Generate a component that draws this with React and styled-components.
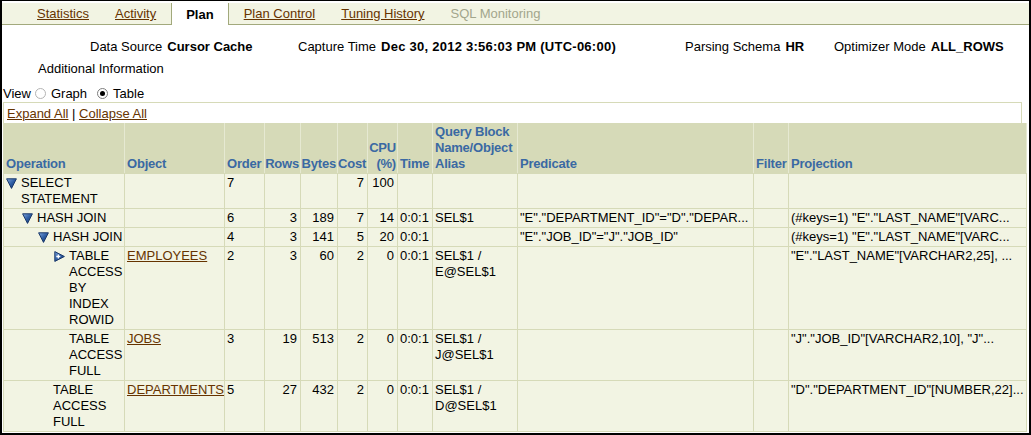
import React from "react";
import styled, { createGlobalStyle } from "styled-components";

const GlobalStyle = createGlobalStyle`
  html, body {
    margin: 0;
    padding: 0;
    background: #fff;
  }
  body {
    font-family: "Liberation Sans", Arial, sans-serif;
    font-size: 13px;
    color: #000;
  }
`;

const beige = "#f2f4e3";
const headerBg = "#d6dab8";
const olive = "#a2a97c";
const linkColor = "#663300";
const headBlue = "#3a69a3";
const muted = "#a2a68c";

const Frame = styled.div`
  box-sizing: border-box;
  width: 1031px;
  height: 435px;
  border: 2px solid #000;
  border-top-width: 1px;
  overflow: hidden;
`;

const TabBar = styled.nav`
  display: flex;
  align-items: stretch;
  height: 21px;
  margin-top: 2px;
  padding-left: 22px;
  background: ${beige};
  border-bottom: 1px solid ${olive};
`;

const Tab = styled.a`
  display: flex;
  align-items: center;
  padding: 0 13px;
  color: ${({ $disabled }) => ($disabled ? muted : linkColor)};
  text-decoration: ${({ $disabled }) => ($disabled ? "none" : "underline")};
  cursor: pointer;
`;

const ActiveTab = styled.span`
  display: flex;
  align-items: center;
  margin: 0 2px -1px;
  padding: 0 14px;
  background: #fff;
  border-left: 1px solid ${olive};
  border-right: 1px solid ${olive};
  font-weight: bold;
`;

const Summary = styled.section`
  padding-top: 14px;
  line-height: 16px;
`;

const InfoRow = styled.div`
  display: flex;
  padding-left: 88px;
  white-space: nowrap;
`;

const Field = styled.div`
  flex: none;
  width: ${({ $w }) => ($w ? `${$w}px` : "auto")};
`;

const Value = styled.b`
  margin-left: 5px;
  letter-spacing: ${({ $spread }) => $spread || 0}px;
`;

const Extra = styled.div`
  margin-top: 6px;
  padding-left: 36px;
`;

const ViewRow = styled.div`
  display: flex;
  align-items: center;
  height: 17px;
  margin-top: 8px;
  padding-left: 1px;
`;

const Option = styled.label`
  display: flex;
  align-items: center;
  gap: 5px;
  margin-left: ${({ $ml }) => $ml}px;
`;

const Radio = styled.span`
  box-sizing: border-box;
  width: 11px;
  height: 11px;
  border-radius: 50%;
  border: 1px solid ${({ $checked }) => ($checked ? "#7d7d7d" : "#b4b4b4")};
  background: #fff;
  display: flex;
  align-items: center;
  justify-content: center;

  &::after {
    content: "";
    width: 5px;
    height: 5px;
    border-radius: 50%;
    background: ${({ $checked }) => ($checked ? "#000" : "transparent")};
  }
`;

const Panel = styled.div`
  box-sizing: border-box;
  width: 1019px;
  margin-left: 1px;
  padding: 3px 0 1px 3px;
  line-height: 16px;
  border: 1px solid ${headerBg};
  border-bottom: none;
`;

const Link = styled.a`
  color: ${linkColor};
  text-decoration: underline;
  cursor: pointer;
`;

const PlanTable = styled.table`
  width: 1023px;
  margin-left: 1px;
  table-layout: fixed;
  border-collapse: collapse;
  line-height: 16px;
`;

const Th = styled.th`
  padding: ${({ $right }) => ($right ? "1px 1px 1px 0" : "1px 1px 1px 2px")};
  background: ${headerBg};
  border: 1px solid ${headerBg};
  border-right-color: #e6e9d2;
  border-top: none;
  color: ${headBlue};
  font-weight: bold;
  letter-spacing: -0.2px;
  text-align: ${({ $right }) => ($right ? "right" : "left")};
  vertical-align: bottom;
`;

const Td = styled.td`
  padding: ${({ $right }) => ($right ? "1px 3px 1px 2px" : "1px 1px 1px 2px")};
  background: ${beige};
  border: 1px solid ${headerBg};
  text-align: ${({ $right }) => ($right ? "right" : "left")};
  vertical-align: top;
  white-space: ${({ $nowrap }) => ($nowrap ? "nowrap" : "normal")};
`;

const OpWrap = styled.div`
  display: flex;
  align-items: flex-start;
  padding-left: ${({ $level }) => $level * 16}px;
`;

const Toggle = styled.span`
  flex: none;
  width: 15px;
  height: 16px;
  padding-top: 3px;
  box-sizing: border-box;
  display: flex;
  align-items: flex-start;
`;

const ExpandedIcon = () => (
  <svg width="11" height="11" viewBox="0 0 11 11">
    <defs>
      <linearGradient id="triDown" x1="0" y1="0" x2="1" y2="1">
        <stop offset="0" stopColor="#7ea6df" />
        <stop offset="0.5" stopColor="#2d5ca3" />
        <stop offset="1" stopColor="#183a72" />
      </linearGradient>
    </defs>
    <path
      d="M0.6 0.8 H10.4 L5.5 10.4 Z"
      fill="url(#triDown)"
      stroke="#1a386a"
      strokeWidth="1"
      strokeLinejoin="round"
    />
  </svg>
);

const CollapsedIcon = () => (
  <svg width="11" height="11" viewBox="0 0 11 11">
    <defs>
      <linearGradient id="triRight" x1="0" y1="0" x2="1" y2="1">
        <stop offset="0" stopColor="#7ea6df" />
        <stop offset="0.5" stopColor="#2d5ca3" />
        <stop offset="1" stopColor="#183a72" />
      </linearGradient>
    </defs>
    <path
      d="M0.8 0.6 L10.4 5.5 L0.8 10.4 Z"
      fill="url(#triRight)"
      stroke="#1a386a"
      strokeWidth="1"
      strokeLinejoin="round"
    />
    <path d="M2.3 5.5 H6.3 M4.3 3.5 V7.5" stroke="#fff" strokeWidth="1.3" />
  </svg>
);

const columns = [
  { key: "op", title: "Operation", width: 121 },
  { key: "object", title: "Object", width: 100 },
  { key: "order", title: "Order", width: 40 },
  { key: "rows", title: "Rows", width: 36, right: true },
  { key: "bytes", title: "Bytes", width: 37, right: true },
  { key: "cost", title: "Cost", width: 30, right: true },
  { key: "cpu", title: "CPU (%)", width: 30, right: true },
  { key: "time", title: "Time", width: 35 },
  { key: "qb", title: "Query Block Name/Object Alias", width: 85 },
  { key: "pred", title: "Predicate", width: 236, nowrap: true },
  { key: "filter", title: "Filter", width: 35 },
  { key: "proj", title: "Projection", width: 238, nowrap: true },
];

const rows = [
  {
    level: 0,
    toggle: "open",
    op: "SELECT STATEMENT",
    order: "7",
    cost: "7",
    cpu: "100",
  },
  {
    level: 1,
    toggle: "open",
    op: "HASH JOIN",
    order: "6",
    rows: "3",
    bytes: "189",
    cost: "7",
    cpu: "14",
    time: "0:0:1",
    qb: "SEL$1",
    pred: '"E"."DEPARTMENT_ID"="D"."DEPAR...',
    proj: '(#keys=1) "E"."LAST_NAME"[VARC...',
  },
  {
    level: 2,
    toggle: "open",
    op: "HASH JOIN",
    order: "4",
    rows: "3",
    bytes: "141",
    cost: "5",
    cpu: "20",
    time: "0:0:1",
    pred: '"E"."JOB_ID"="J"."JOB_ID"',
    proj: '(#keys=1) "E"."LAST_NAME"[VARC...',
  },
  {
    level: 3,
    toggle: "closed",
    op: "TABLE ACCESS BY INDEX ROWID",
    object: "EMPLOYEES",
    order: "2",
    rows: "3",
    bytes: "60",
    cost: "2",
    cpu: "0",
    time: "0:0:1",
    qb: "SEL$1 / E@SEL$1",
    proj: '"E"."LAST_NAME"[VARCHAR2,25], ...',
  },
  {
    level: 3,
    op: "TABLE ACCESS FULL",
    object: "JOBS",
    order: "3",
    rows: "19",
    bytes: "513",
    cost: "2",
    cpu: "0",
    time: "0:0:1",
    qb: "SEL$1 / J@SEL$1",
    proj: '"J"."JOB_ID"[VARCHAR2,10], "J"...',
  },
  {
    level: 2,
    op: "TABLE ACCESS FULL",
    object: "DEPARTMENTS",
    order: "5",
    rows: "27",
    bytes: "432",
    cost: "2",
    cpu: "0",
    time: "0:0:1",
    qb: "SEL$1 / D@SEL$1",
    proj: '"D"."DEPARTMENT_ID"[NUMBER,22]...',
  },
];

const renderCell = (row, col) => {
  if (col.key === "op") {
    return (
      <OpWrap $level={row.level}>
        <Toggle>
          {row.toggle === "open" && <ExpandedIcon />}
          {row.toggle === "closed" && <CollapsedIcon />}
        </Toggle>
        <span>{row.op}</span>
      </OpWrap>
    );
  }
  if (col.key === "object") {
    return row.object ? <Link>{row.object}</Link> : null;
  }
  return row[col.key] || "";
};

export default function App() {
  return (
    <>
      <GlobalStyle />
      <Frame>
        <TabBar>
          <Tab>Statistics</Tab>
          <Tab>Activity</Tab>
          <ActiveTab>Plan</ActiveTab>
          <Tab>Plan Control</Tab>
          <Tab>Tuning History</Tab>
          <Tab $disabled>SQL Monitoring</Tab>
        </TabBar>

        <Summary>
          <InfoRow>
            <Field $w={208}>
              Data Source<Value>Cursor Cache</Value>
            </Field>
            <Field $w={387}>
              Capture Time
              <Value $spread={0.25}>Dec 30, 2012 3:56:03 PM (UTC-06:00)</Value>
            </Field>
            <Field $w={149}>
              Parsing Schema<Value>HR</Value>
            </Field>
            <Field>
              Optimizer Mode<Value>ALL_ROWS</Value>
            </Field>
          </InfoRow>
          <Extra>Additional Information</Extra>
          <ViewRow>
            View
            <Option $ml={4}>
              <Radio />
              Graph
            </Option>
            <Option $ml={10}>
              <Radio $checked />
              Table
            </Option>
          </ViewRow>
        </Summary>

        <Panel>
          <Link>Expand All</Link> | <Link>Collapse All</Link>
        </Panel>

        <PlanTable>
          <colgroup>
            {columns.map((c) => (
              <col key={c.key} style={{ width: c.width }} />
            ))}
          </colgroup>
          <thead>
            <tr>
              {columns.map((c) => (
                <Th key={c.key} $right={c.right}>
                  {c.title}
                </Th>
              ))}
            </tr>
          </thead>
          <tbody>
            {rows.map((row, i) => (
              <tr key={i}>
                {columns.map((c) => (
                  <Td key={c.key} $right={c.right} $nowrap={c.nowrap}>
                    {renderCell(row, c)}
                  </Td>
                ))}
              </tr>
            ))}
          </tbody>
        </PlanTable>
      </Frame>
    </>
  );
}
